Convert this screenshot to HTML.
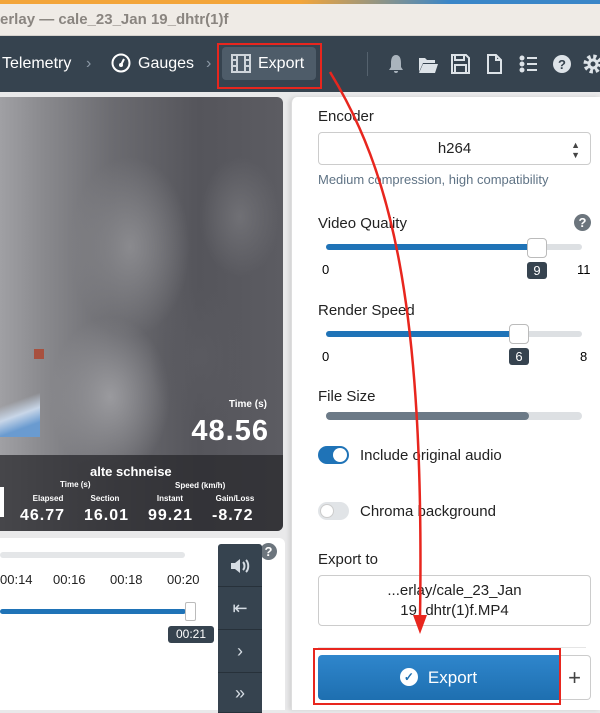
<!DOCTYPE html>
<html><head><meta charset="utf-8"><style>
*{box-sizing:border-box;margin:0;padding:0}
body{width:600px;height:710px;overflow:hidden;background:#e9e9ea;font-family:"Liberation Sans",sans-serif;position:relative}
.abs{position:absolute}
.nav{left:0;top:36px;width:600px;height:56px;background:#36434f}
.nav span{position:absolute;color:#fff;font-size:16px;top:19px}
.lbl{font-size:15px;color:#222}
.track{height:6px;border-radius:3px;background:#dde0e3}
.fill{height:6px;border-radius:3px;background:#1f73b7}
.knob{width:20px;height:20px;border:1px solid #bbb;background:#fff;border-radius:4px}
.tag{background:#36434f;color:#fff;font-size:13px;border-radius:3px;text-align:center}
.ov{color:#fff;font-weight:bold;text-align:center}
.vb{left:218px;width:44px;background:#36434f;color:#d5dce3;text-align:center;font-size:18px;border-bottom:1px solid #27313a}
</style></head><body>
<div class="abs" style="left:0;top:0;width:600px;height:4px;background:linear-gradient(90deg,#f3a53a 0%,#f3a53a 50%,#3a86c8 75%,#3a86c8 100%)"></div>
<div class="abs" style="left:0;top:4px;width:600px;height:32px;background:#efebe6;border-bottom:1px solid #d6d2cd"></div>
<div class="abs" style="left:0;top:11px;font-size:15px;color:#8a8580;font-weight:bold">erlay — cale_23_Jan 19_dhtr(1)f</div>
<div class="abs nav">
<span style="left:2px">Telemetry</span>
<span style="left:86px;color:#8c99a6">›</span>
<svg class="abs" style="left:111px;top:17px" width="20" height="20" viewBox="0 0 20 20"><circle cx="10" cy="10" r="8.5" fill="none" stroke="#fff" stroke-width="2"/><circle cx="10" cy="12" r="2" fill="#fff"/><path d="M10 12 L13 6" stroke="#fff" stroke-width="2"/></svg>
<span style="left:138px">Gauges</span>
<span style="left:206px;color:#8c99a6">›</span>
<div class="abs" style="left:222px;top:11px;width:94px;height:33px;background:#4e5c69;border-radius:4px"></div>
<svg class="abs" style="left:231px;top:18px" width="20" height="19" viewBox="0 0 20 19"><rect x="1" y="1" width="18" height="17" fill="none" stroke="#cfd5db" stroke-width="2"/><path d="M6 1v17M14 1v17M1 6h5M1 12h5M14 6h5M14 12h5" stroke="#cfd5db" stroke-width="2"/></svg>
<span style="left:258px">Export</span>
<div class="abs" style="left:367px;top:16px;width:1px;height:24px;background:#55626e"></div>
<svg class="abs" style="left:386px;top:16px" width="215" height="24" viewBox="0 0 215 24" fill="#aab4bd">
<path d="M10 3c-4 0-5 4-5 8v4l-2 3h14l-2-3v-4c0-4-1-8-5-8zM8 19h4a2 2 0 0 1-4 0z"/>
<path d="M33 6h6l2 2h8v3H37l-4 9V6zM37 12h15l-3 9H33z" fill="#dde3e8"/>
<path d="M66 3h14l3 3v15H66zM69 3v5h9V3M69 13h11v8H69z" fill="none" stroke="#dde3e8" stroke-width="2"/>
<path d="M102 3h8l5 5v13H102z M110 3v5h5" fill="none" stroke="#dde3e8" stroke-width="2"/>
<circle cx="136" cy="6" r="2.5" fill="#dde3e8"/><circle cx="136" cy="12" r="2.5" fill="#dde3e8"/><circle cx="136" cy="18" r="2.5" fill="#dde3e8"/><path d="M141 5h10v2H141zM141 11h10v2H141zM141 17h10v2H141z" fill="#dde3e8"/>
<circle cx="176" cy="12" r="9" fill="#dde3e8"/><text x="176" y="17" text-anchor="middle" font-size="13" font-weight="bold" fill="#36434f" font-family="Liberation Sans">?</text>
<circle cx="207" cy="12" r="7" fill="none" stroke="#dde3e8" stroke-width="5" stroke-dasharray="3 2.5"/><circle cx="207" cy="12" r="4" fill="none" stroke="#dde3e8" stroke-width="3"/>
</svg>
</div>
<!-- video -->
<div class="abs" style="left:0;top:97px;width:283px;height:434px;border-radius:0 6px 6px 0;overflow:hidden;background:
radial-gradient(ellipse 60px 90px at 130px 150px,#8a8a8e,transparent),
radial-gradient(ellipse 50px 70px at 200px 260px,#5a5a60,transparent),
radial-gradient(ellipse 40px 60px at 240px 120px,#707075,transparent),
radial-gradient(ellipse 60px 80px at 110px 300px,#9a9a9e,transparent),
linear-gradient(90deg,#a0a0a4 0%,#8a8a8e 15%,#6b6b70 40%,#55555b 70%,#5c5c62 100%)">
<div class="abs" style="left:0;top:280px;width:40px;height:60px;background:linear-gradient(160deg,transparent 40%,#c8d6e8 60%,#6a9bd0 80%)"></div>
<div class="abs" style="left:34px;top:252px;width:10px;height:10px;background:#a8503e"></div>
<div class="abs ov" style="right:16px;top:302px;font-size:10px">Time (s)</div>
<div class="abs ov" style="right:14px;top:318px;font-size:29px;letter-spacing:1px">48.56</div>
<div class="abs" style="left:0;top:358px;width:283px;height:76px;background:rgba(40,40,44,.75)"></div>
<div class="abs" style="left:0;top:390px;width:4px;height:30px;background:#fff"></div>
<div class="abs ov" style="left:90px;top:367px;font-size:13px">alte schneise</div>
<div class="abs ov" style="left:60px;top:383px;font-size:8px">Time (s)</div>
<div class="abs ov" style="left:175px;top:384px;font-size:8px">Speed (km/h)</div>
<div class="abs ov" style="left:28px;top:397px;font-size:8px;width:40px">Elapsed</div>
<div class="abs ov" style="left:85px;top:397px;font-size:8px;width:40px">Section</div>
<div class="abs ov" style="left:150px;top:397px;font-size:8px;width:40px">Instant</div>
<div class="abs ov" style="left:210px;top:397px;font-size:8px;width:50px">Gain/Loss</div>
<div class="abs ov" style="left:20px;top:410px;font-size:16px;letter-spacing:1px">46.77</div>
<div class="abs ov" style="left:84px;top:410px;font-size:16px;letter-spacing:1px">16.01</div>
<div class="abs ov" style="left:148px;top:410px;font-size:16px;letter-spacing:1px">99.21</div>
<div class="abs ov" style="left:212px;top:410px;font-size:16px;letter-spacing:1px">-8.72</div>
</div>
<!-- timeline -->
<div class="abs" style="left:0;top:538px;width:285px;height:172px;background:#fff;border-radius:0 6px 0 0"></div>
<div class="abs track" style="left:0;top:552px;width:185px;height:6px;background:#e4e6e8"></div>
<div class="abs" style="left:0;top:572px;font-size:13px;color:#222">00:14</div>
<div class="abs" style="left:53px;top:572px;font-size:13px;color:#222">00:16</div>
<div class="abs" style="left:110px;top:572px;font-size:13px;color:#222">00:18</div>
<div class="abs" style="left:167px;top:572px;font-size:13px;color:#222">00:20</div>
<div class="abs fill" style="left:0;top:609px;width:186px;height:5px"></div>
<div class="abs" style="left:185px;top:602px;width:11px;height:19px;background:#fff;border:1px solid #bbb;border-radius:2px"></div>
<div class="abs tag" style="left:168px;top:626px;width:46px;height:17px;line-height:17px;font-size:12px">00:21</div>
<div class="abs" style="left:260px;top:543px;width:17px;height:17px;border-radius:50%;background:#6c757d;color:#fff;font-size:13px;font-weight:bold;text-align:center;line-height:17px">?</div>
<div class="abs vb" style="top:544px;height:43px;border-radius:3px 3px 0 0"><svg width="22" height="20" viewBox="0 0 22 20" style="margin-top:12px"><path d="M2 7h4l5-4v14l-5-4H2z" fill="#d5dce3"/><path d="M14 6c2 2 2 6 0 8M17 4c3 3 3 9 0 12" stroke="#d5dce3" stroke-width="2" fill="none"/></svg></div>
<div class="abs vb" style="top:587px;height:43px;line-height:43px">⇤</div>
<div class="abs vb" style="top:630px;height:43px;line-height:43px">›</div>
<div class="abs vb" style="top:673px;height:40px;line-height:40px">»</div>
<!-- right panel -->
<div class="abs" style="left:291px;top:97px;width:309px;height:613px;background:#fff;border-left:1px solid #ddd;border-radius:6px 0 0 0;box-shadow:-2px 0 4px rgba(0,0,0,.1)"></div>
<div class="abs lbl" style="left:318px;top:108px">Encoder</div>
<div class="abs" style="left:318px;top:132px;width:273px;height:33px;border:1px solid #ccc;border-radius:4px;text-align:center;line-height:31px;font-size:15px;color:#222">h264<span style="position:absolute;right:10px;top:0;font-size:9px;line-height:10px;padding-top:7px;color:#444">▲<br>▼</span></div>
<div class="abs" style="left:318px;top:172px;font-size:13px;color:#5f7385">Medium compression, high compatibility</div>
<div class="abs lbl" style="left:318px;top:215px">Video Quality</div>
<div class="abs" style="left:574px;top:214px;width:17px;height:17px;border-radius:50%;background:#6c757d;color:#fff;font-size:13px;font-weight:bold;text-align:center;line-height:17px">?</div>
<div class="abs track" style="left:326px;top:244px;width:256px"></div>
<div class="abs fill" style="left:326px;top:244px;width:212px"></div>
<div class="abs knob" style="left:527px;top:238px"></div>
<div class="abs" style="left:322px;top:262px;font-size:13px">0</div>
<div class="abs tag" style="left:527px;top:262px;width:20px;height:17px;line-height:17px">9</div>
<div class="abs" style="left:577px;top:262px;font-size:13px">11</div>
<div class="abs lbl" style="left:318px;top:302px">Render Speed</div>
<div class="abs track" style="left:326px;top:331px;width:256px"></div>
<div class="abs fill" style="left:326px;top:331px;width:194px"></div>
<div class="abs knob" style="left:509px;top:324px"></div>
<div class="abs" style="left:322px;top:349px;font-size:13px">0</div>
<div class="abs tag" style="left:509px;top:348px;width:20px;height:17px;line-height:17px">6</div>
<div class="abs" style="left:580px;top:349px;font-size:13px">8</div>
<div class="abs lbl" style="left:318px;top:388px">File Size</div>
<div class="abs track" style="left:326px;top:412px;width:256px;height:8px;border-radius:4px"></div>
<div class="abs" style="left:326px;top:412px;width:203px;height:8px;border-radius:4px;background:#6c7a87"></div>
<div class="abs" style="left:318px;top:446px;width:31px;height:18px;border-radius:9px;background:#1f73b7"><div style="position:absolute;right:2px;top:2px;width:14px;height:14px;border-radius:50%;background:#fff"></div></div>
<div class="abs lbl" style="left:360px;top:447px">Include original audio</div>
<div class="abs" style="left:318px;top:502px;width:31px;height:18px;border-radius:9px;background:#e1e4e7"><div style="position:absolute;left:2px;top:2px;width:14px;height:14px;border-radius:50%;background:#fff;border:1px solid #ccc"></div></div>
<div class="abs lbl" style="left:360px;top:503px">Chroma background</div>
<div class="abs lbl" style="left:318px;top:551px">Export to</div>
<div class="abs" style="left:318px;top:575px;width:273px;height:51px;border:1px solid #ccc;border-radius:4px;text-align:center;font-size:15px;line-height:20px;padding-top:5px;color:#222">...erlay/cale_23_Jan<br>19_dhtr(1)f.MP4</div>
<div class="abs" style="left:318px;top:647px;width:268px;height:1px;background:#e5e5e5"></div>
<div class="abs" style="left:318px;top:655px;width:241px;height:45px;background:linear-gradient(#2f86cc,#1e6fb0);border-radius:4px 0 0 4px;color:#fff;font-size:17px;text-align:center;line-height:45px"><span style="display:inline-block;width:18px;height:18px;border-radius:50%;background:#fff;color:#1e6fb0;font-size:12px;line-height:18px;vertical-align:2px;margin-right:10px;font-weight:bold">✓</span>Export</div>
<div class="abs" style="left:559px;top:655px;width:32px;height:45px;border:1px solid #ccc;border-left:none;border-radius:0 4px 4px 0;text-align:center;line-height:43px;font-size:22px;color:#444">+</div>
<!-- annotations -->
<div class="abs" style="left:217px;top:43px;width:105px;height:46px;border:2px solid #e8261e"></div>
<div class="abs" style="left:313px;top:648px;width:248px;height:57px;border:2px solid #e8261e"></div>
<svg class="abs" style="left:0;top:0" width="600" height="710"><path d="M330 72 C 390 170, 425 300, 420 618" fill="none" stroke="#e8261e" stroke-width="2.5"/><path d="M413 615 L420 634 L427 615 Z" fill="#e8261e"/></svg>
</body></html>
